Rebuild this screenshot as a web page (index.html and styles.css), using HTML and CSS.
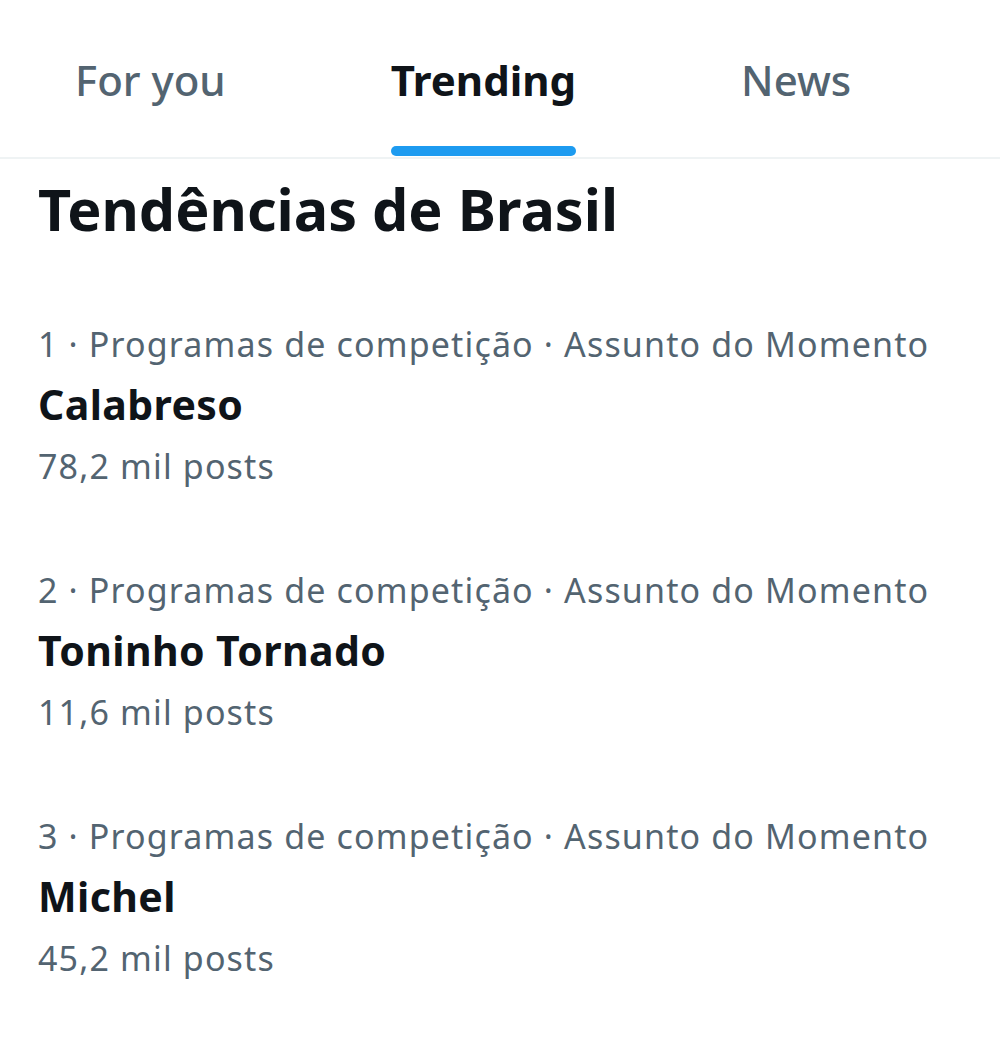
FILE: index.html
```html
<!DOCTYPE html>
<html>
<head>
  <title>Trending</title>
  <link rel="stylesheet" href="styles.css">
</head>
<body>
  <div class="tabs">
    <a class="tab">
      <span class="tab-label">For you</span>
      <span class="tab-bar"></span>
    </a>
    <a class="tab active">
      <span class="tab-label">Trending</span>
      <span class="tab-bar"></span>
    </a>
    <a class="tab">
      <span class="tab-label">News</span>
      <span class="tab-bar"></span>
    </a>
  </div>

  <h2 class="title">Tendências de Brasil</h2>

  <div class="trends">
    <div class="trend">
      <div class="meta">1 · Programas de competição · Assunto do Momento</div>
      <div class="name">Calabreso</div>
      <div class="count">78,2 mil posts</div>
    </div>
    <div class="trend">
      <div class="meta">2 · Programas de competição · Assunto do Momento</div>
      <div class="name">Toninho Tornado</div>
      <div class="count">11,6 mil posts</div>
    </div>
    <div class="trend">
      <div class="meta">3 · Programas de competição · Assunto do Momento</div>
      <div class="name">Michel</div>
      <div class="count">45,2 mil posts</div>
    </div>
  </div>
</body>
</html>
```

FILE: styles.css
```css
body {
  margin: 0;
  font-family: "Noto Sans", sans-serif;
  background-color: #fff;
  color: #0f1419;
}
.tabs {
  display: flex;
  gap: 165px;
  padding-left: 75px;
  height: 157px;
  border-bottom: 2px solid #eff3f4;
}
.tab {
  display: flex;
  flex-direction: column;
  padding-top: 50px;
  color: #536471;
  font-size: 42px;
  font-weight: 500;
}
.tab-label {
  line-height: 60px;
  white-space: nowrap;
}
.tab-bar {
  margin-top: auto;
  margin-bottom: 1px;
  height: 10px;
  border-radius: 5px;
}
.tab.active {
  color: #0f1419;
  font-weight: 700;
}
.tab.active .tab-bar {
  background-color: #1d9bf0;
}
.title {
  margin: 15px 0 0;
  padding-left: 38px;
  font-size: 57.5px;
  line-height: 70px;
  font-weight: 700;
}
.trends {
  padding-top: 39px;
}
.trend {
  padding: 33px 38px 32px;
}
.meta {
  color: #536471;
  font-size: 34px;
  line-height: 56px;
  letter-spacing: 1.15px;
  white-space: nowrap;
}
.name {
  font-size: 41px;
  line-height: 64px;
  letter-spacing: 0.4px;
  font-weight: 700;
}
.count {
  color: #536471;
  font-size: 34px;
  line-height: 61px;
  letter-spacing: 1.15px;
}
```
